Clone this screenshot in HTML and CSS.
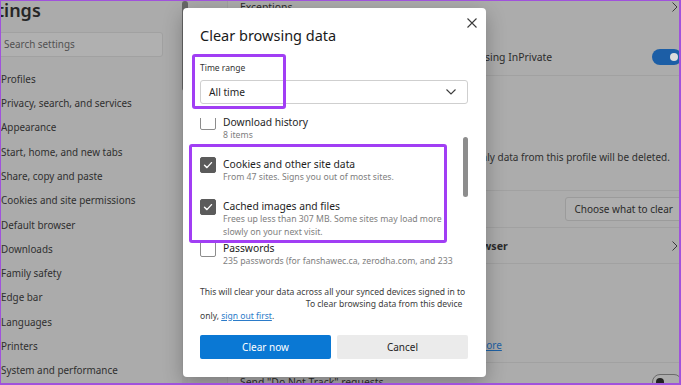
FILE: index.html
```html
<!DOCTYPE html>
<html lang="en">
<head>
<meta charset="utf-8">
<title>Settings - Clear browsing data</title>
<link rel="stylesheet" href="styles.css">
</head>
<body>
<div class="frame">
  <aside class="sidebar">
    <div class="sidebar-inner">
      <h1 class="settings-title">Settings</h1>
      <div class="search">
        <svg class="search-icon" width="12" height="12" viewBox="0 0 12 12"><circle cx="5" cy="5" r="3.8" fill="none" stroke="#444" stroke-width="1"/><path d="M7.8 7.8 11.3 11.3" stroke="#444" stroke-width="1"/></svg>
        <span>Search settings</span>
      </div>
      <nav class="nav">
        <div class="nav-item">Profiles</div>
        <div class="nav-item">Privacy, search, and services</div>
        <div class="nav-item">Appearance</div>
        <div class="nav-item">Start, home, and new tabs</div>
        <div class="nav-item">Share, copy and paste</div>
        <div class="nav-item">Cookies and site permissions</div>
        <div class="nav-item">Default browser</div>
        <div class="nav-item">Downloads</div>
        <div class="nav-item">Family safety</div>
        <div class="nav-item">Edge bar</div>
        <div class="nav-item">Languages</div>
        <div class="nav-item">Printers</div>
        <div class="nav-item">System and performance</div>
      </nav>
    </div>
  </aside>
  <div class="sb-track"><div class="sb-thumb"></div></div>
  <main class="page">
    <section class="card">
      <div class="row r-exc">
        <span class="label">Exceptions</span>
        <svg class="chev" width="6" height="10" viewBox="0 0 6 10"><path d="M.5.5 5 5 .5 9.5" fill="none" stroke="#3a3a3a" stroke-width="1"/></svg>
      </div>
      <div class="row r-inpriv">
        <span class="label">Always use "Strict" tracking prevention when browsing InPrivate</span>
        <span class="toggle on"></span>
      </div>
      <div class="sep b-clear">
        <div class="block-title">Clear browsing data</div>
        <div class="desc">This clears history, passwords, cookies and more. Only data from this profile will be deleted.</div>
      </div>
      <div class="sep row r-btn">
        <span class="label">Clear browsing data now</span>
        <span class="ghost-btn">Choose what to clear</span>
      </div>
      <div class="sep row r-close">
        <span class="label strong">Choose what to clear when you close your browser</span>
        <svg class="chev" width="6" height="10" viewBox="0 0 6 10"><path d="M.5.5 5 5 .5 9.5" fill="none" stroke="#3a3a3a" stroke-width="1"/></svg>
      </div>
      <div class="sep b-ie">
        <div class="block-title">Clear browsing data for Internet Explorer</div>
        <div class="desc d1">This clears data in Internet Explorer mode.</div>
        <div class="desc d2">Internet Explorer's data will also be cleared. <span class="page-link">Learn more</span></div>
      </div>
      <div class="sep row r-dnt">
        <span class="label">Send "Do Not Track" requests</span>
        <span class="toggle off"></span>
      </div>
    </section>
  </main>

  <div class="dialog">
    <svg class="close" width="10" height="10" viewBox="0 0 10 10"><path d="M.5.5l9 9M9.5.5l-9 9" stroke="#3b3b3b" stroke-width="1.1"/></svg>
    <h2 class="dlg-title">Clear browsing data</h2>
    <div class="field-label">Time range</div>
    <div class="select">
      <span>All time</span>
      <svg width="10" height="6" viewBox="0 0 10 6"><path d="M.5.5 5 5 9.5.5" fill="none" stroke="#3b3b3b" stroke-width="1.1"/></svg>
    </div>
    <div class="list">
      <div class="list-inner">
        <div class="item">
          <span class="cb checked"><svg viewBox="0 0 16 16"><path d="M4 8.3 6.8 11 12 5.3" fill="none" stroke="#fff" stroke-width="1.6" stroke-linecap="round" stroke-linejoin="round"/></svg></span>
          <div><div class="it-title">Browsing history</div><div class="it-sub">1,202 items. Includes autocompletions in the address bar.</div></div>
        </div>
        <div class="item">
          <span class="cb"></span>
          <div><div class="it-title">Download history</div><div class="it-sub">8 items</div></div>
        </div>
        <div class="item">
          <span class="cb checked"><svg viewBox="0 0 16 16"><path d="M4 8.3 6.8 11 12 5.3" fill="none" stroke="#fff" stroke-width="1.6" stroke-linecap="round" stroke-linejoin="round"/></svg></span>
          <div><div class="it-title">Cookies and other site data</div><div class="it-sub">From 47 sites. Signs you out of most sites.</div></div>
        </div>
        <div class="item">
          <span class="cb checked"><svg viewBox="0 0 16 16"><path d="M4 8.3 6.8 11 12 5.3" fill="none" stroke="#fff" stroke-width="1.6" stroke-linecap="round" stroke-linejoin="round"/></svg></span>
          <div><div class="it-title">Cached images and files</div><div class="it-sub">Frees up less than 307 MB. Some sites may load more slowly on your next visit.</div></div>
        </div>
        <div class="item">
          <span class="cb"></span>
          <div><div class="it-title">Passwords</div><div class="it-sub">235 passwords (for fanshawec.ca, zerodha.com, and 233 more)</div></div>
        </div>
        <div class="item">
          <span class="cb"></span>
          <div><div class="it-title">Autofill form data (includes forms and cards)</div><div class="it-sub">45 suggestions</div></div>
        </div>
      </div>
      <div class="thumb"></div>
    </div>
    <p class="note">This will clear your data across all your synced devices signed in to <span class="redacted"></span> To clear browsing data from this device only, <span class="link">sign out first</span>.</p>
    <div class="actions">
      <span class="btn primary">Clear now</span>
      <span class="btn secondary">Cancel</span>
    </div>
    <div class="hl hl-range"></div>
    <div class="hl hl-items"></div>
  </div>
</div>
</body>
</html>
```

FILE: styles.css
```css
html, body {
  margin: 0;
  padding: 0;
}

body {
  width: 681px;
  height: 385px;
  overflow: hidden;
  font-family: "Noto Sans", "Open Sans", sans-serif;
  background: #acacac;
}

.frame {
  position: relative;
  box-sizing: border-box;
  width: 681px;
  height: 385px;
  border-style: solid;
  border-color: #a052dc;
  border-width: 1px 2px 2px 1px;
  display: flex;
  overflow: hidden;
  background: #ababab;
}

/* ---------- sidebar ---------- */
.sidebar {
  width: 181px;
  flex: none;
  overflow: hidden;
  background: #ababab;
  color: #2f2f2f;
}

.sidebar-inner {
  margin-left: -32px;
  width: 213px;
}

.settings-title {
  margin: -1px 0 0;
  font-size: 18px;
  line-height: 20px;
  font-weight: 600;
  color: #262626;
  white-space: nowrap;
}

.search {
  margin-top: 11.7px;
  width: 194px;
  height: 25.6px;
  box-sizing: border-box;
  border: 1px solid #a1a1a1;
  border-radius: 3px;
  background: #b0b0b0;
  display: flex;
  align-items: center;
  gap: 20px;
  padding-left: 2px;
  font-size: 9.9px;
  color: #505050;
}

.search-icon {
  flex: none;
}

.nav {
  margin-top: 9.5px;
  padding-left: 32px;
}

.nav-item {
  height: 24.3px;
  line-height: 24.3px;
  font-size: 9.9px;
  white-space: nowrap;
}

.sb-track {
  width: 6px;
  flex: none;
  background: #a6a6a6;
}

.sb-thumb {
  width: 6px;
  height: 90px;
  border-radius: 3px;
  background: #676767;
}

/* ---------- page / card ---------- */
.page {
  flex: 1;
  min-width: 0;
  overflow: hidden;
  padding-left: 39px;
  background: #a9a9a9;
}

.card {
  width: 442px;
  margin-top: -21px;
  padding: 0 12px;
  border-left: 1px solid #a1a1a1;
  background: #acacac;
  color: #2b2b2b;
  font-size: 10px;
}

.row {
  display: flex;
  align-items: center;
  justify-content: space-between;
  box-sizing: border-box;
}

.sep {
  box-sizing: border-box;
  border-top: 1px solid #a1a1a1;
}

.label {
  font-size: 10.4px;
  line-height: 14px;
  white-space: nowrap;
}

.label.strong {
  font-size: 10.6px;
  font-weight: 700;
}

.chev {
  flex: none;
  margin-right: 4px;
}

.r-exc {
  height: 54px;
}

.r-inpriv {
  height: 41px;
  align-items: flex-start;
  padding-top: 16px;
}

.r-inpriv .toggle {
  margin-top: -1px;
}

.b-clear {
  height: 115px;
  display: flex;
  flex-direction: column;
  justify-content: flex-end;
  padding-bottom: 26px;
}

.block-title {
  font-size: 10.4px;
  line-height: 14px;
  font-weight: 700;
  white-space: nowrap;
  margin-bottom: 6px;
}

.desc {
  font-size: 10px;
  line-height: 14px;
  white-space: nowrap;
  color: #2f2f2f;
}

.r-btn {
  height: 37px;
}

.ghost-btn {
  height: 24px;
  box-sizing: border-box;
  padding: 0 8px;
  border: 1px solid #9b9b9b;
  border-radius: 3px;
  background: #afafaf;
  display: flex;
  align-items: center;
  font-size: 10px;
  white-space: nowrap;
  color: #2b2b2b;
}

.r-close {
  height: 36px;
}

.b-ie {
  height: 99px;
  padding-top: 18px;
}

.b-ie .block-title {
  margin-bottom: 0;
}

.b-ie .d1 {
  margin-top: 21px;
}

.b-ie .d2 {
  margin-top: 7px;
}

.page-link {
  color: #1f62a5;
  text-decoration: underline;
}

.r-dnt {
  height: 38px;
}

.toggle {
  position: relative;
  flex: none;
  width: 30px;
  height: 16px;
  box-sizing: border-box;
  border-radius: 8px;
}

.toggle::after {
  content: "";
  position: absolute;
  top: 50%;
  width: 8px;
  height: 8px;
  margin-top: -4px;
  border-radius: 50%;
}

.toggle.on {
  background: #1c5ea6;
}

.toggle.on::after {
  right: 4px;
  background: #dcdcdc;
}

.toggle.off {
  border: 1px solid #6a6a6a;
}

.toggle.off::after {
  left: 3px;
  background: #222;
}

/* ---------- dialog ---------- */
.dialog {
  position: absolute;
  left: 182px;
  top: 7px;
  width: 303px;
  box-sizing: border-box;
  padding: 17px 18px 18px 17px;
  background: #fff;
  border-radius: 4px;
  box-shadow: 0 6px 20px rgba(0, 0, 0, 0.28);
  color: #1b1b1b;
}

.close {
  position: absolute;
  left: 283.5px;
  top: 9.5px;
}

.dlg-title {
  margin: 0;
  font-size: 14.5px;
  line-height: 20px;
  font-weight: 400;
  color: #1a1a1a;
}

.field-label {
  margin-top: 17px;
  font-size: 8.5px;
  line-height: 12px;
  color: #333;
}

.select {
  margin-top: 6px;
  height: 24px;
  box-sizing: border-box;
  border: 1px solid #cfcfcf;
  border-radius: 3px;
  padding: 0 11px 0 8px;
  display: flex;
  align-items: center;
  justify-content: space-between;
  font-size: 10.2px;
  color: #1f1f1f;
}

.list {
  position: relative;
  margin-top: 13.5px;
  height: 152px;
  overflow: hidden;
}

.list-inner {
  margin-top: -45.3px;
  padding-right: 13px;
}

.item {
  display: grid;
  grid-template-columns: 16px 1fr;
  column-gap: 7px;
  height: 42.2px;
  align-items: start;
}

.cb {
  width: 16px;
  height: 16px;
  box-sizing: border-box;
  border: 1px solid #8c8c8c;
  border-radius: 2px;
  background: #fff;
}

.cb.checked {
  border-color: #5b5b5b;
  background: #5b5b5b;
}

.cb svg {
  display: block;
  width: 14px;
  height: 14px;
}

.it-title {
  margin-top: 1.5px;
  font-size: 10.3px;
  line-height: 13px;
  color: #1e1e1e;
}

.it-sub {
  font-size: 8.7px;
  line-height: 12.7px;
  color: #7e7e7e;
}

.thumb {
  position: absolute;
  right: 0;
  top: 19.5px;
  width: 5px;
  height: 60px;
  border-radius: 3px;
  background: #8d8d8d;
}

.note {
  margin: 16.1px 0 0;
  font-size: 8.55px;
  line-height: 12.2px;
  color: #3d3d3d;
}

.redacted {
  display: inline-block;
  width: 103.5px;
  height: 1px;
}

.link {
  color: #2b7bc9;
  text-decoration: underline;
}

.actions {
  margin-top: 12.8px;
  display: grid;
  grid-template-columns: 1fr 1fr;
  column-gap: 6px;
}

.btn {
  height: 24px;
  border-radius: 2px;
  display: flex;
  align-items: center;
  justify-content: center;
  font-size: 10px;
}

.btn.primary {
  background: #0a78d4;
  color: #fff;
}

.btn.secondary {
  background: #ebebeb;
  color: #1f1f1f;
}

.hl {
  position: absolute;
  box-sizing: border-box;
  border: 3px solid #a13ef4;
  border-radius: 3px;
  pointer-events: none;
}

.hl-range {
  left: 8.7px;
  top: 46px;
  width: 94.3px;
  height: 55px;
}

.hl-items {
  left: 6.3px;
  top: 136.3px;
  width: 257.7px;
  height: 99px;
}
```
